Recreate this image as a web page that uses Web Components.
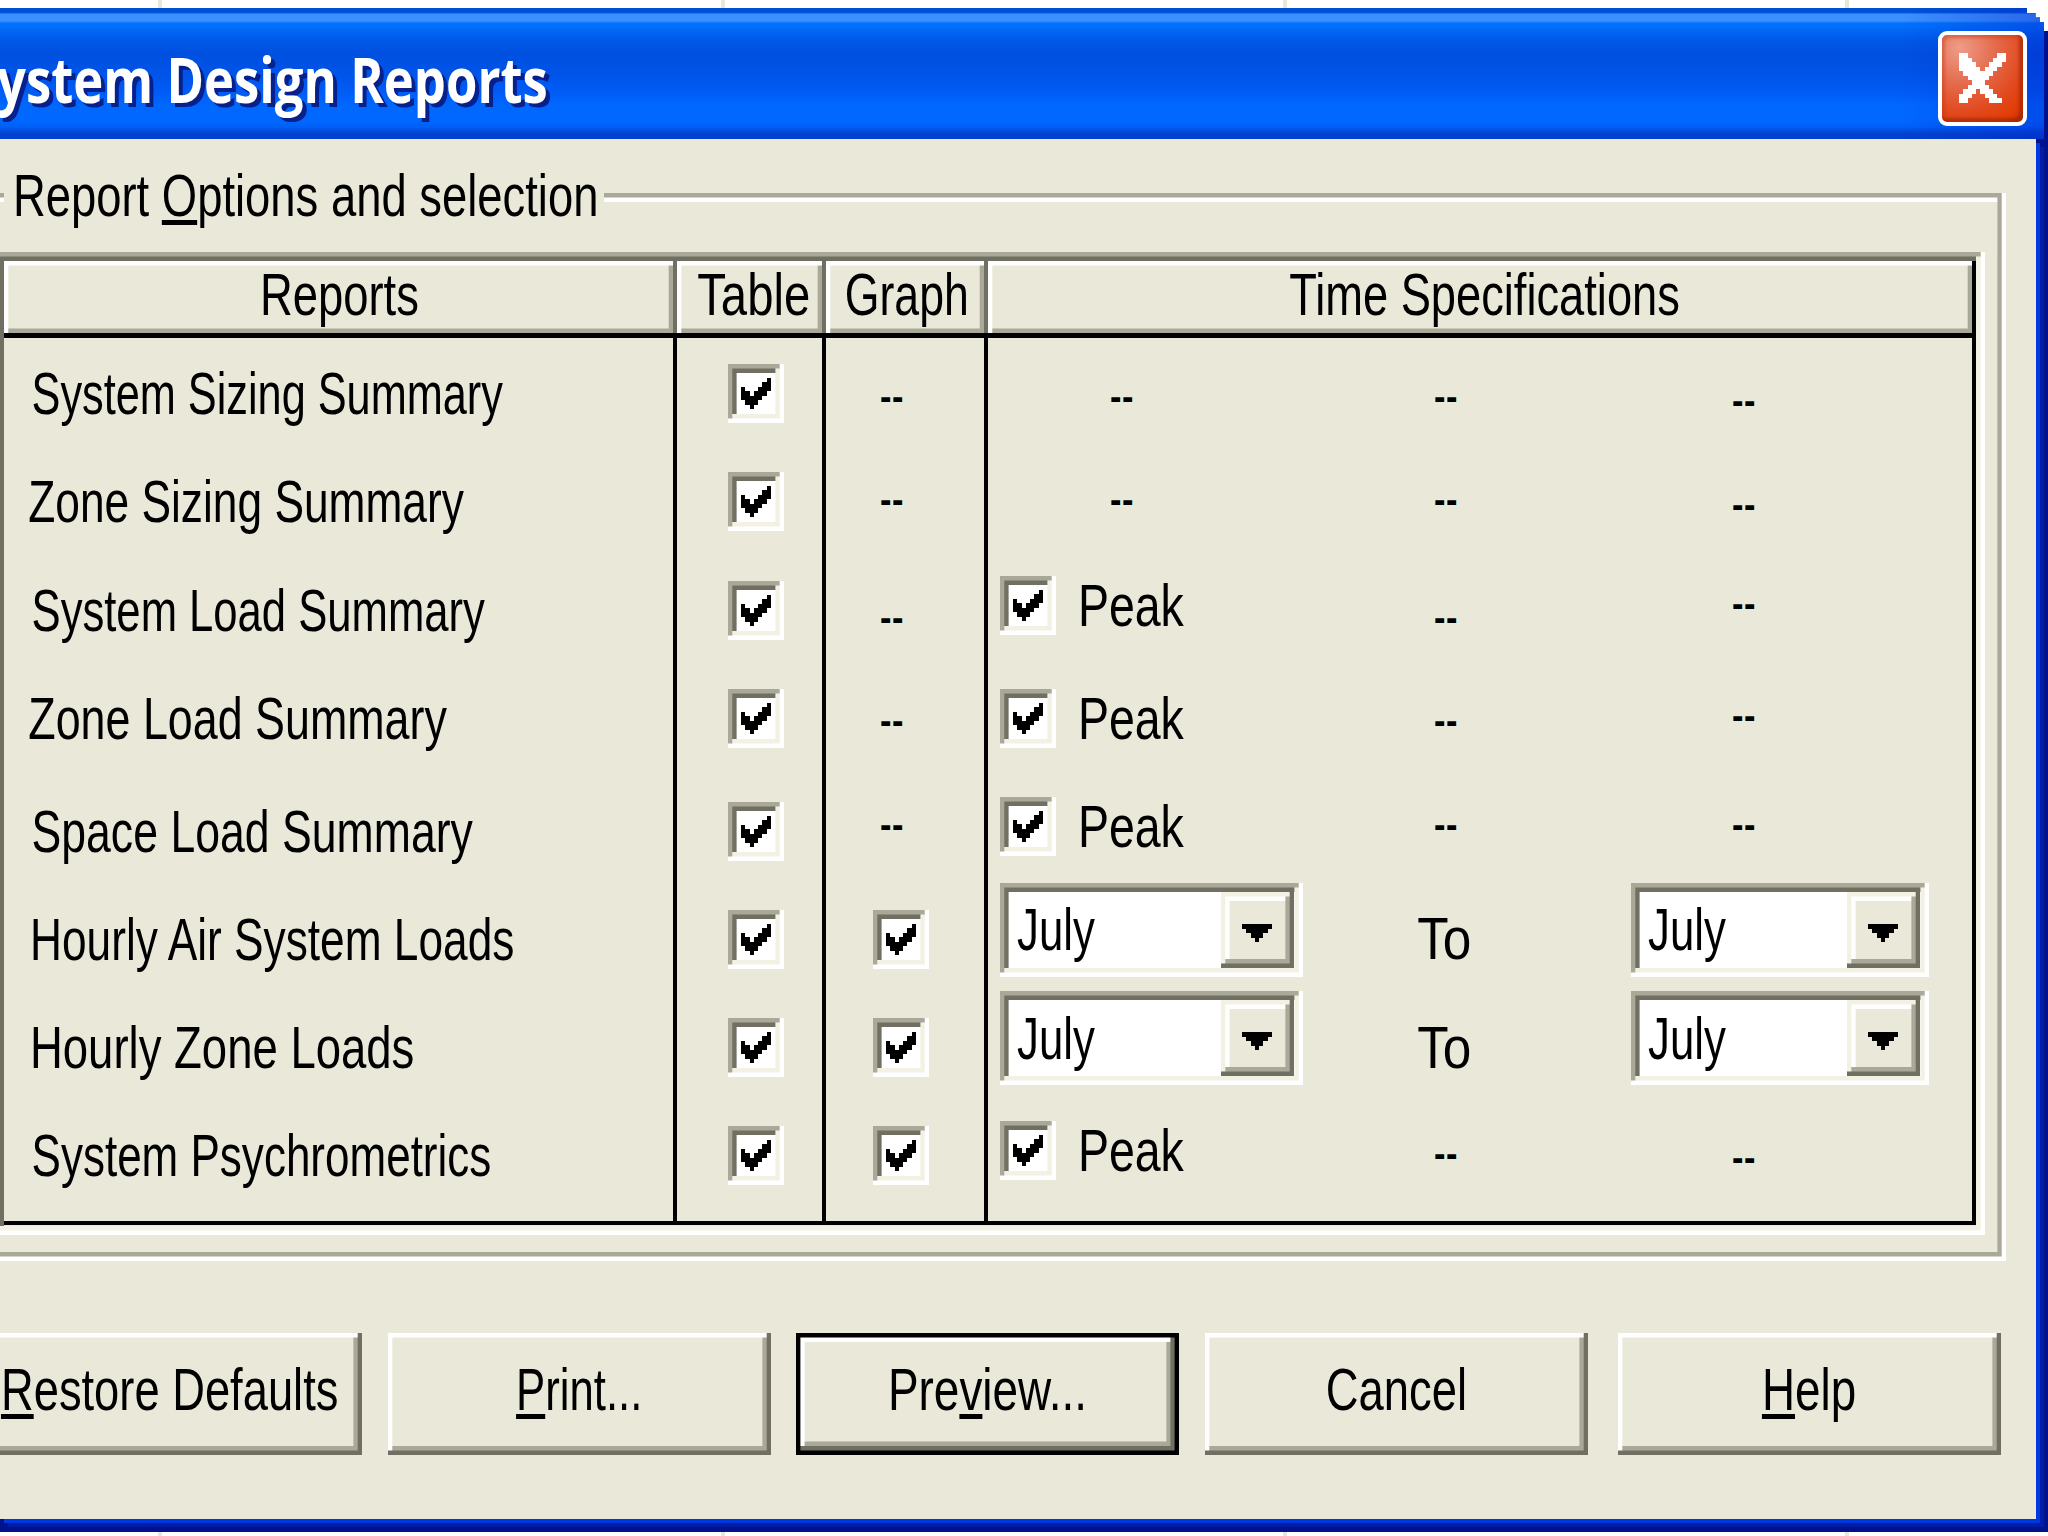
<!DOCTYPE html>
<html lang="en">
<head>
<meta charset="utf-8">
<title>System Design Reports</title>
<style>
	html, body {
		margin: 0;
		width: 2048px;
		height: 1536px;
		overflow: hidden;
	}
	body {
		box-sizing: border-box;
		padding-top: 8px;
		background: repeating-linear-gradient(90deg, #e9e7d6 0 4px, #fff 4px 562.3px) 159px 0 / 2249px 100%, #fff;
		background-position: -404px 0;
		font-family: "Liberation Sans", Arial, sans-serif;
		font-size: 59.6px;
		color: #000;
		--face: #eae9d9;
		--light: #fff;
		--cream: #f3f1e4;
		--shade: #aaa999;
		--dark: #716f62;
	}
</style>
</head>
<body>
<xp-window>
	<fit-text slot="title" ink="549">ystem Design Reports</fit-text>
	<xp-group>
		<fit-text slot="legend" ink="580">Report <u>O</u>ptions and selection</fit-text>
		<report-table></report-table>
	</xp-group>
	<xp-button slot="buttons" style="margin-left:-21px"><fit-text ink="333"><u>R</u>estore Defaults</fit-text></xp-button>
	<xp-button slot="buttons"><fit-text ink="120"><u>P</u>rint...</fit-text></xp-button>
	<xp-button slot="buttons" default><fit-text ink="192.5">Pre<u>v</u>iew...</fit-text></xp-button>
	<xp-button slot="buttons"><fit-text ink="136.5">Cancel</fit-text></xp-button>
	<xp-button slot="buttons" style="margin-left:5px"><fit-text ink="89.5"><u>H</u>elp</fit-text></xp-button>
</xp-window>
<script>
(function() {
	function makeTemplate(html) {
		var t = document.createElement("template");
		t.innerHTML = html;
		return t;
	}

	function attach(el, template) {
		var root = el.attachShadow({mode: "open"});
		root.appendChild(template.content.cloneNode(true));
		return root;
	}

	var ctx = document.createElement("canvas").getContext("2d");

	// a line of text squeezed so its ink is exactly "ink" px wide
	// the box is one capital letter high, with the baseline on its bottom edge
	var fitTemplate = makeTemplate(`
		<style>
		:host {
			display: block;
			flex: none;
			height: 41px;
			line-height: 41px;
			white-space: nowrap;
		}
		span {
			display: block;
			width: max-content;
			transform-origin: 0 0;
		}
		::slotted(u) {
			text-decoration: underline;
			text-decoration-thickness: 4.5px;
			text-underline-offset: 4px;
			text-decoration-skip-ink: none;
		}
		</style>
		<span><slot></slot></span>
	`);

	class FitText extends HTMLElement {
		connectedCallback() {
			if(!this.shadowRoot) {
				attach(this, fitTemplate);
			}
			var cs = getComputedStyle(this);
			ctx.font = cs.fontWeight + " " + cs.fontSize + " " + cs.fontFamily;
			var m = ctx.measureText(this.textContent);
			var ink = parseFloat(this.getAttribute("ink"));
			var k = ink / (m.actualBoundingBoxRight + m.actualBoundingBoxLeft);
			this.style.width = ink + "px";
			this.shadowRoot.querySelector("span").style.transform =
				"translateX(" + m.actualBoundingBoxLeft * k + "px) scaleX(" + k + ")";
		}
	}

	var checkTemplate = makeTemplate(`
		<style>
		:host {
			display: block;
			flex: none;
			width: 56px;
			height: 58.5px;
			background: #fff;
			box-shadow: inset -4.3px -4.5px var(--light), inset 4.3px 4.5px var(--shade),
				inset -8.6px -9px var(--cream), inset 8.6px 9px var(--dark);
		}
		svg { display: block; width: 100%; height: 100%; }
		</style>
		<svg viewBox="0 0 13 13" preserveAspectRatio="none" shape-rendering="crispEdges">
			<path d="M3 5h1v1h1v1h1v-1h1v-1h1v-1h1v-1h1v3h-1v1h-1v1h-1v1h-1v1h-1v-1h-1v-1h-1z"/>
		</svg>
	`);

	class XpCheck extends HTMLElement {
		constructor() {
			super();
			attach(this, checkTemplate);
		}
	}

	var comboTemplate = makeTemplate(`
		<style>
		:host {
			display: flex;
			box-sizing: border-box;
			height: 94px;
			padding: 9px 8.6px 9px 17px;
			justify-content: space-between;
			background: #fff;
			box-shadow: inset -4.3px -4.5px var(--light), inset 4.3px 4.5px var(--shade),
				inset -8.6px -9px var(--cream), inset 8.6px 9px var(--dark);
		}
		.value { padding-top: 17.5px; }
		.drop {
			box-sizing: border-box;
			width: 73px;
			padding: 32px 0 0 21px;
			background: var(--face);
			box-shadow: inset -4.3px -4.5px var(--dark), inset 4.3px 4.5px var(--cream),
				inset -8.6px -9px var(--shade), inset 8.6px 9px var(--light);
		}
		svg { display: block; width: 30px; height: 18px; }
		</style>
		<div class="value"><slot></slot></div>
		<div class="drop">
			<svg viewBox="0 0 7 4" preserveAspectRatio="none" shape-rendering="crispEdges">
				<path d="M0 0h7v1h-1v1h-1v1h-1v1h-1v-1h-1v-1h-1v-1h-1z"/>
			</svg>
		</div>
	`);

	class XpCombo extends HTMLElement {
		constructor() {
			super();
			attach(this, comboTemplate);
		}
	}

	var buttonTemplate = makeTemplate(`
		<style>
		:host {
			display: flex;
			flex: none;
			box-sizing: border-box;
			width: 383px;
			height: 122px;
			padding-top: 36px;
			justify-content: center;
			background: var(--face);
			box-shadow: inset -4.3px -4.5px var(--dark), inset 4.3px 4.5px var(--light),
				inset -8.6px -9px var(--shade);
		}
		:host([default]) {
			box-shadow: inset 0 0 0 4.4px #000, inset -8.6px -9px var(--dark),
				inset 8.6px 9px var(--light), inset -12.6px -13.5px var(--shade);
		}
		</style>
		<slot></slot>
	`);

	class XpButton extends HTMLElement {
		constructor() {
			super();
			attach(this, buttonTemplate);
		}
	}

	var groupTemplate = makeTemplate(`
		<style>
		:host {
			display: block;
			box-sizing: border-box;
			width: 2006px;
			height: 1068px;
			margin-top: 54px;
			box-shadow: inset -4.3px -4.5px var(--light), inset 0 4.5px var(--shade),
				inset -8.6px -9px var(--shade), inset 0 9px var(--light);
		}
		.legend {
			display: flow-root;
			width: max-content;
			margin: 0 0 18px 4px;
			padding: 0 8px 0 12px;
			background: var(--face);
			transform: translateY(-18px);
		}
		</style>
		<div class="legend"><slot name="legend"></slot></div>
		<slot></slot>
	`);

	class XpGroup extends HTMLElement {
		constructor() {
			super();
			attach(this, groupTemplate);
		}
	}

	// offsets are measured from the top of the row
	var rows = [
		{ h: 108, name: "System Sizing Summary", x: 29, w: 470, y: 35, graph: 58, time: [["--", 58], ["--", 58], ["--", 62]] },
		{ h: 109, name: "Zone Sizing Summary", x: 25, w: 435, y: 35, graph: 53, time: [["--", 53], ["--", 53], ["--", 58]] },
		{ h: 108, name: "System Load Summary", x: 29, w: 452, y: 35, graph: 62, time: [["Peak", 21], ["--", 62], ["--", 48]] },
		{ h: 113, name: "Zone Load Summary", x: 25, w: 418, y: 35, graph: 57, time: [["Peak", 26], ["--", 57], ["--", 52]] },
		{ h: 108, name: "Space Load Summary", x: 29, w: 440, y: 35, graph: 48, time: [["Peak", 21], ["--", 48], ["--", 48]] },
		{ h: 108, name: "Hourly Air System Loads", x: 29, w: 482.5, y: 35, time: [["July", -1.5], ["To", 34], ["July", -1.5]] },
		{ h: 108, name: "Hourly Zone Loads", x: 29, w: 380, y: 35, time: [["July", -1], ["To", 35], ["July", -1]] },
		{ h: 121, name: "System Psychrometrics", x: 29, w: 457, y: 35, time: [["Peak", 21], ["--", 53], ["--", 57]] }
	];

	// a dash sits 22px below the top of the capitals
	function dash(y, cls) {
		return `<div class="${cls}" style="margin-top:${y - 22}px"><fit-text ink="21.5">--</fit-text></div>`;
	}

	function timeItem(item, i) {
		var text = item[0], y = item[1];
		switch(text) {
			case "--":
				return dash(y, "dash" + i);
			case "Peak":
				return `<div class="peak" style="margin-top:${y}px"><xp-check></xp-check><fit-text ink="103">Peak</fit-text></div>`;
			case "To":
				return `<div class="to" style="margin-top:${y}px"><fit-text ink="51.5">To</fit-text></div>`;
			default:
				return `<xp-combo class="combo${i}" style="margin-top:${y}px"><fit-text ink="78">${text}</fit-text></xp-combo>`;
		}
	}

	function rowHtml(r) {
		return `<div class="row" style="height:${r.h}px">
			<div class="cell" style="padding:${r.y}px 0 0 ${r.x}px"><fit-text ink="${r.w}">${r.name}</fit-text></div>
			<div class="cell"><xp-check class="table"></xp-check></div>
			<div class="cell">${r.graph ? dash(r.graph, "gdash") : `<xp-check class="graph"></xp-check>`}</div>
			<div class="cell time">${r.time.map(timeItem).join("")}</div>
		</div>`;
	}

	var tableTemplate = makeTemplate(`
		<style>
		:host {
			display: block;
			box-sizing: border-box;
			width: 1985px;
			height: 982.5px;
			padding: 9px 9px 9px 4px;
			box-shadow: inset -4.3px -4.5px var(--light), inset 0 4.5px var(--shade),
				inset -9px -9px var(--cream), inset 4px 9px var(--dark);
		}
		.head, .row {
			display: grid;
			grid-template-columns: 673px 149px 162px 988px;
		}
		.head {
			height: 72px;
			border-bottom: 5px solid #000;
		}
		.head div {
			display: flex;
			justify-content: center;
			padding-top: 13px;
			border-right: 4px solid var(--dark);
			box-shadow: inset 4.3px 4.5px var(--light), inset -4.3px -4.5px var(--shade);
		}
		.head div:last-child { border-color: #000; }
		.cell {
			display: flow-root;
			border-right: 4px solid #000;
		}
		.time {
			display: grid;
			grid-template-columns: 412px 220px 1fr;
			align-items: start;
		}
		.body { border-bottom: 4.5px solid #000; }
		.table { margin: 26px 0 0 51px; }
		.graph { margin: 26px 0 0 47px; }
		.gdash { padding-left: 55px; }
		.dash0 { padding-left: 123px; }
		.dash1 { padding-left: 35px; }
		.dash2 { padding-left: 113px; }
		.peak {
			display: flex;
			gap: 25px;
			padding-left: 12px;
		}
		.peak fit-text { margin-top: 9px; }
		.to { padding-left: 18px; }
		.combo0 { width: 303px; margin-left: 12px; }
		.combo2 { width: 298px; margin-left: 11px; }
		</style>
		<div class="head">
			<div style="padding-left:4px"><fit-text ink="154.5">Reports</fit-text></div>
			<div style="padding-left:8px"><fit-text ink="110.5">Table</fit-text></div>
			<div style="padding-left:3px"><fit-text ink="119.5">Graph</fit-text></div>
			<div style="padding-left:8px"><fit-text ink="388.5">Time Specifications</fit-text></div>
		</div>
		<div class="body">${rows.map(rowHtml).join("")}</div>
	`);

	class ReportTable extends HTMLElement {
		constructor() {
			super();
			attach(this, tableTemplate);
		}
	}

	var windowTemplate = makeTemplate(`
		<style>
		:host {
			display: flex;
			flex-direction: column;
			width: 2048px;
			height: 1524px;
			background: #00138c;
			clip-path: polygon(0 0, 2027px 0, 2027px 5px, 2035.5px 5px, 2035.5px 9.5px, 2040px 9.5px,
				2040px 14px, 2044px 14px, 2044px 23px, 100% 23px, 100% 100%, 0 100%);
		}
		.bar {
			display: flex;
			flex: none;
			box-sizing: border-box;
			height: 131px;
			justify-content: space-between;
			align-items: flex-start;
			padding: 23px 21px 0 0;
			background:
				linear-gradient(90deg, transparent 1900px, rgba(0, 30, 200, .35) 2036px 2044px, #00108c 2044px),
				linear-gradient(#0050d4 0 4px, #0060e8 5px, #3c90ff 6px 13px, #0074ff 15px, #006cfa 20px,
				#0058e6 33px, #0050e0 46px, #0054e8 66px, #005cf6 84px, #0068ff 98px 112px, #0060f8 119px, #0044d0 125px, #0040cc);
		}
		.title {
			padding-top: 27px;
			margin-left: -3px;
			font-family: "Open Sans", "Noto Sans", sans-serif;
			font-weight: 700;
			font-size: 63px;
			color: #fff;
			text-shadow: 5px 4px 0 #08208c;
		}
		.close {
			box-sizing: border-box;
			width: 89px;
			height: 94.5px;
			padding: 18px 17px;
			border: 4px solid #fff;
			border-radius: 9px;
			background: radial-gradient(circle at 22% 15%, #ee9c88, #e4694a 38%, #e2481c 68%, #e03c04 88%, #b83008);
			background-clip: padding-box;
			box-shadow: inset -4px -4px 3px rgba(140, 30, 0, .5), inset 3px 3px 3px rgba(200, 50, 20, .4);
		}
		.close svg { display: block; width: 47px; height: 50px; }
		.body {
			display: flex;
			flex: 1;
			flex-direction: column;
			justify-content: flex-start;
			margin-bottom: 13.5px;
			margin-right: 12px;
			background: var(--face);
			box-shadow: 4px 4px #0038e0, 8px 8px #001ca8;
		}
		.buttons {
			display: flex;
			gap: 25.5px;
			margin-top: 72px;
		}
		</style>
		<div class="bar">
			<div class="title"><slot name="title"></slot></div>
			<div class="close">
				<svg viewBox="0 0 11 11" preserveAspectRatio="none" shape-rendering="crispEdges" fill="#fff">
					<path d="M0 0h2v1h1v1h1v1h1v1h1v-1h1v-1h1v-1h1v-1h2v2h-1v1h-1v1h-1v1h-1v1h-1v1h1v1h1v1h1v1h1v2h-2v-1h-1v-1h-1v-1h-1v-1h-1v1h-1v1h-1v1h-1v1h-2v-2h1v-1h1v-1h1v-1h1v-1h-1v-1h-1v-1h-1v-1h-1z"/>
				</svg>
			</div>
		</div>
		<div class="body">
			<slot></slot>
			<div class="buttons"><slot name="buttons"></slot></div>
		</div>
	`);

	class XpWindow extends HTMLElement {
		constructor() {
			super();
			attach(this, windowTemplate);
		}
	}

	customElements.define("xp-window", XpWindow);
	customElements.define("xp-group", XpGroup);
	customElements.define("xp-button", XpButton);
	customElements.define("xp-check", XpCheck);
	customElements.define("xp-combo", XpCombo);
	customElements.define("report-table", ReportTable);
	// last, so the inherited fonts are in place when it measures
	customElements.define("fit-text", FitText);
})();
</script>
</body>
</html>
